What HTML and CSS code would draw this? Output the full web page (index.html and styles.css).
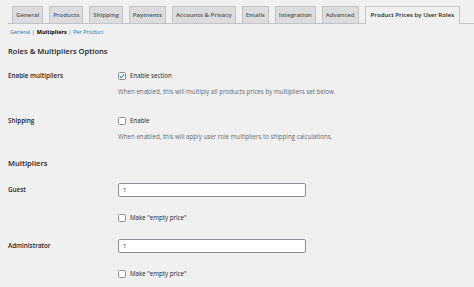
FILE: index.html
```html
<!DOCTYPE html>
<html>
<head>
<meta charset="utf-8">
<link rel="stylesheet" href="styles.css">
</head>
<body>
<div class="wrap">
  <nav class="tabs">
    <a class="tab">General</a>
    <a class="tab">Products</a>
    <a class="tab">Shipping</a>
    <a class="tab">Payments</a>
    <a class="tab">Accounts &amp; Privacy</a>
    <a class="tab">Emails</a>
    <a class="tab">Integration</a>
    <a class="tab">Advanced</a>
    <a class="tab active">Product Prices by User Roles</a>
  </nav>
  <div class="subnav">
    <a class="link">General</a><span class="sep">|</span><a class="current">Multipliers</a><span class="sep">|</span><a class="link">Per Product</a>
  </div>
  <h2 class="heading first">Roles &amp; Multipliers Options</h2>

  <div class="row r1">
    <div class="th">Enable multipliers</div>
    <div class="td">
      <label class="cb"><span class="box"><svg viewBox="0 0 10 10" width="8" height="8"><path d="M2.2 5.2 L4.2 7.2 L7.9 2.8" fill="none" stroke="#3582c4" stroke-width="1.4"/></svg></span>Enable section</label>
      <p class="desc">When enabled, this will multiply all products prices by multipliers set below.</p>
    </div>
  </div>

  <div class="row r2">
    <div class="th">Shipping</div>
    <div class="td">
      <label class="cb"><span class="box"></span>Enable</label>
      <p class="desc">When enabled, this will apply user role multipliers to shipping calculations.</p>
    </div>
  </div>

  <h2 class="heading second">Multipliers</h2>

  <div class="row r3">
    <div class="th tall">Guest</div>
    <div class="td"><div class="input">1</div></div>
  </div>
  <div class="row r4">
    <div class="th"></div>
    <div class="td"><label class="cb"><span class="box"></span>Make "empty price"</label></div>
  </div>
  <div class="row r4">
    <div class="th tall">Administrator</div>
    <div class="td"><div class="input">1</div></div>
  </div>
  <div class="row r4">
    <div class="th"></div>
    <div class="td"><label class="cb"><span class="box"></span>Make "empty price"</label></div>
  </div>
</div>
</body>
</html>
```
FILE: styles.css
```css
html, body {
  margin: 0;
  padding: 0;
  background: #f0f0f1;
}
body {
  font-family: "Open Sans", "Noto Sans", sans-serif;
  color: #1d2327;
  width: 474px;
  height: 287px;
  overflow: hidden;
}
.wrap {
  padding: 6px 0 0 8px;
}
.tabs {
  display: flex;
  gap: 6px;
  padding-left: 4px;
  border-bottom: 1px solid #c3c4c7;
  height: 17px;
  align-items: flex-end;
}
.tab {
  box-sizing: border-box;
  height: 17px;
  padding: 0 3px;
  border: 1px solid #c3c4c7;
  border-bottom: none;
  background: #dcdcde;
  color: #50575e;
  font-size: 6.1px;
  font-weight: 600;
  line-height: 16px;
  white-space: nowrap;
}
.tab.active {
  background: #f0f0f1;
  color: #1d2327;
  height: 18px;
  margin-bottom: -1px;
  padding: 0 5px;
}
.subnav {
  margin-top: 3px;
  padding-left: 2px;
  font-size: 5.5px;
  line-height: 10px;
  color: #50575e;
}
.subnav .link { color: #2271b1; }
.subnav .current { color: #000; font-weight: 700; }
.subnav .sep { margin: 0 2px 0 1.5px; }
.heading {
  margin: 0;
  font-size: 7.6px;
  font-weight: 600;
  line-height: 10px;
}
.heading.first { margin-top: 9px; }
.heading.second { margin-top: 16px; }
.row { display: flex; }
.th {
  width: 110px;
  flex: none;
  font-size: 6.3px;
  font-weight: 600;
  line-height: 10px;
}
.th.tall { line-height: 14px; }
.td { flex: none; }
.r1 { margin-top: 15px; }
.r2 { margin-top: 19px; }
.r3 { margin-top: 15px; }
.r4 { margin-top: 16px; }
.cb {
  display: flex;
  align-items: center;
  gap: 4px;
  font-size: 6.2px;
  line-height: 10px;
  height: 10px;
}
.box {
  box-sizing: border-box;
  width: 8px;
  height: 8px;
  border: 1px solid #8c8f94;
  border-radius: 1.5px;
  background: #fff;
  display: flex;
  align-items: center;
  justify-content: center;
  overflow: hidden;
}
.box svg { flex: none; }
.desc {
  margin: 6px 0 0;
  font-size: 6.2px;
  line-height: 10px;
  color: #646970;
  white-space: nowrap;
}
.input {
  box-sizing: border-box;
  width: 188px;
  height: 14px;
  border: 1px solid #8c8f94;
  border-radius: 2px;
  background: #fff;
  padding: 0 4px;
  font-size: 6px;
  line-height: 12px;
  color: #2c3338;
}
```
